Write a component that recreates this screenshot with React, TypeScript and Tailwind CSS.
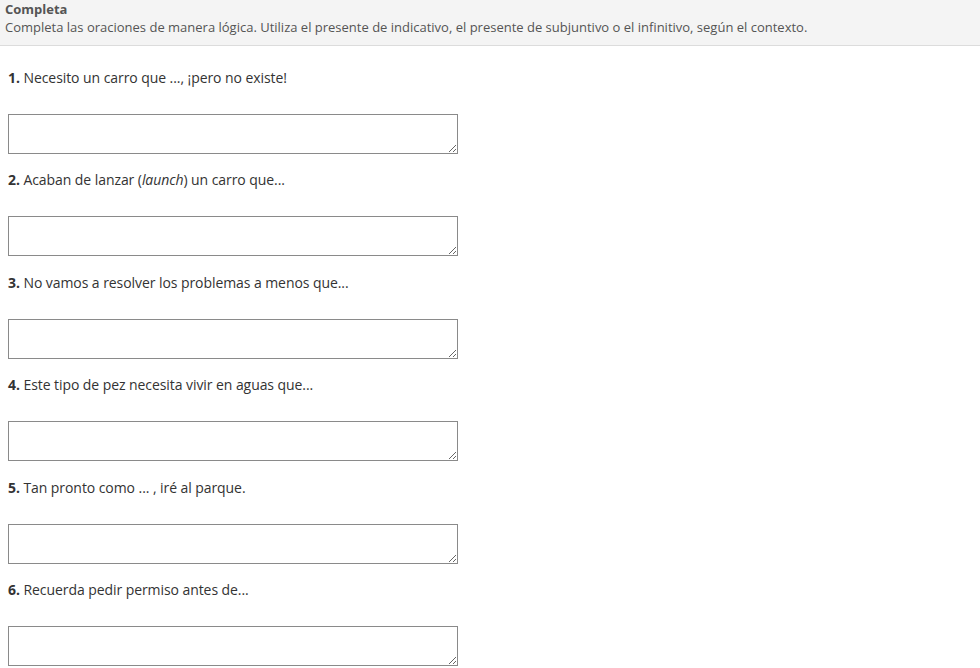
const questions = [
  { n: "1.", text: <>Necesito un carro que ..., ¡pero no existe!</> },
  { n: "2.", text: <>Acaban de lanzar (<em>launch</em>) un carro que...</> },
  { n: "3.", text: <>No vamos a resolver los problemas a menos que...</> },
  { n: "4.", text: <>Este tipo de pez necesita vivir en aguas que...</> },
  { n: "5.", text: <>Tan pronto como ... , iré al parque.</> },
  { n: "6.", text: <>Recuerda pedir permiso antes de...</> },
];

export default function App() {
  return (
    <div className="min-h-screen bg-white font-['Open_Sans',sans-serif] text-[#333]">
      <div className="bg-[#f4f4f4] border-b border-[#dcdcdc] px-[5px] pb-[9px] text-[13px] leading-[18px] text-[#555]">
        <strong className="block font-bold">Completa</strong>
        <p>
          Completa las oraciones de manera lógica. Utiliza el presente de indicativo, el presente de subjuntivo o el
          infinitivo, según el contexto.
        </p>
      </div>
      <div className="flex flex-col gap-[16.4px] px-2 pt-[22px]">
        {questions.map((q) => (
          <div key={q.n} className="flex flex-col">
            <p className="text-[14px] leading-[20px] tracking-[-0.07px]">
              <strong className="font-bold">{q.n}</strong> {q.text}
            </p>
            <textarea className="mt-[26px] h-[40px] w-[450px] border border-[#8a8a8a] bg-white" />
          </div>
        ))}
      </div>
    </div>
  );
}
